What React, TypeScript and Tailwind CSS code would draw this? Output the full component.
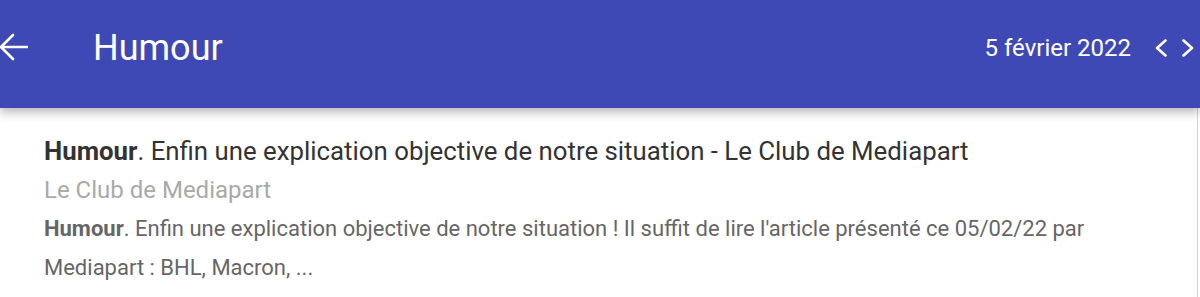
function Chevron({ dir }: { dir: 'left' | 'right' }) {
  return (
    <svg width="12" height="18" viewBox="0 0 12 18" fill="none" stroke="currentColor" strokeWidth="2.6" strokeLinecap="round" strokeLinejoin="round">
      {dir === 'left' ? <polyline points="10.5,1.5 2,9 10.5,16.5" /> : <polyline points="1.5,1.5 10,9 1.5,16.5" />}
    </svg>
  )
}

export default function App() {
  return (
    <div className="h-[297px] w-[1200px] overflow-hidden bg-white font-['Roboto',sans-serif]">
      <header className="relative z-10 flex h-[108px] items-center bg-[#3f49b5] text-white shadow-[0_4px_10px_rgba(0,0,0,0.3)]">
        <svg width="28" height="28" viewBox="0 0 28 28" fill="none" stroke="currentColor" strokeWidth="2.6" strokeLinecap="round" strokeLinejoin="round" className="mt-[-14px]">
          <line x1="1" y1="14" x2="27" y2="14" />
          <polyline points="13,2 1,14 13,26" />
        </svg>
        <h1 className="ml-[65px] mt-[-12px] text-[36px] font-normal">Humour</h1>
        <div className="ml-auto mr-[6px] mt-[-12px] flex items-center">
          <span className="text-[24px]">5 février 2022</span>
          <span className="ml-[24px] flex"><Chevron dir="left" /></span>
          <span className="ml-[15px] flex"><Chevron dir="right" /></span>
        </div>
      </header>
      <main className="mr-[2px] h-[189px] border-r border-gray-300 pl-[44px] pt-[26px]">
        <h2 className="text-[25.8px] leading-[34px] text-[#333]">
          <b className="font-bold">Humour</b>. Enfin une explication objective de notre situation - Le Club de Mediapart
        </h2>
        <p className="mt-[7px] text-[24px] leading-[30px] text-[#a9a9a9]">Le Club de Mediapart</p>
        <p className="mt-[4px] w-[1100px] text-[22px] leading-[39px] text-[#666]">
          <b className="font-bold">Humour</b>. Enfin une explication objective de notre situation ! Il suffit de lire l'article présenté ce 05/02/22 par Mediapart : BHL, Macron, ...
        </p>
      </main>
    </div>
  )
}
